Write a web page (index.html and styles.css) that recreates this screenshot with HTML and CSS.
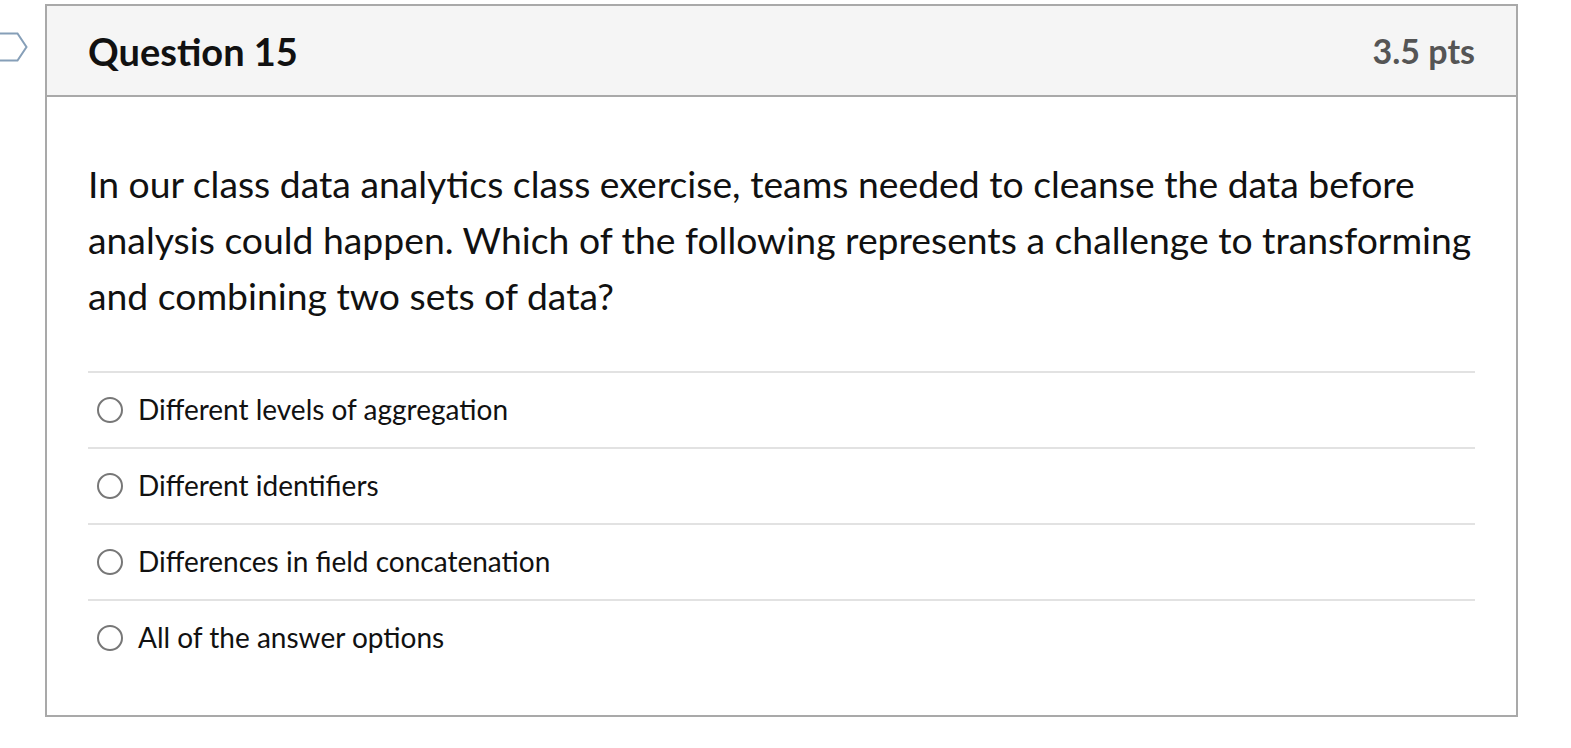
FILE: index.html
```html
<!DOCTYPE html>
<html lang="en">
<head>
<meta charset="utf-8">
<title>Question 15</title>
<link rel="stylesheet" href="styles.css">
</head>
<body>
<svg class="flag" width="30" height="32" viewBox="0 0 30 32" aria-hidden="true">
  <polygon points="-10,1.5 17.5,1.5 26.5,15 17.5,28.5 -10,28.5" fill="none" stroke="#869fb8" stroke-width="2"/>
</svg>
<div class="card">
  <div class="card-header">
    <span class="q-title">Question 15</span>
    <span class="q-points">3.5 pts</span>
  </div>
  <div class="card-body">
    <p class="q-text">In our class data analytics class exercise, teams needed to cleanse the data before analysis could happen. Which of the following represents a challenge to transforming and combining two sets of data?</p>
    <ul class="answers">
      <li class="answer"><span class="radio"></span><span>Different levels of aggregation</span></li>
      <li class="answer"><span class="radio"></span><span>Different identifiers</span></li>
      <li class="answer"><span class="radio"></span><span>Differences in field concatenation</span></li>
      <li class="answer"><span class="radio"></span><span>All of the answer options</span></li>
    </ul>
  </div>
</div>
</body>
</html>
```
FILE: styles.css
```css
html, body {
  margin: 0;
  padding: 0;
  background: #fff;
}
body {
  font-family: Lato, "Open Sans", sans-serif;
  color: #111;
  position: relative;
  padding-top: 4px;
}
.flag {
  position: absolute;
  left: 0;
  top: 32px;
}
.card {
  margin-left: 45px;
  width: 1473px;
  box-sizing: border-box;
  border: 2px solid #a9a9a9;
}
.card-header {
  height: 89px;
  background: #f5f5f5;
  border-bottom: 2px solid #a9a9a9;
  display: flex;
  align-items: center;
  justify-content: space-between;
  padding: 0 41px;
}
.q-title {
  font-weight: 700;
  font-size: 38px;
  color: #111;
}
.q-points {
  font-weight: 700;
  font-size: 34px;
  color: #555;
}
.card-body {
  padding: 59px 41px 40px;
}
.q-text {
  margin: 0;
  font-size: 37.3px;
  line-height: 56px;
}
.answers {
  list-style: none;
  margin: 47px 0 0;
  padding: 0;
}
.answer {
  height: 76px;
  box-sizing: border-box;
  border-top: 2px solid #e2e2e2;
  display: flex;
  align-items: center;
  font-size: 28px;
  padding-left: 9px;
  padding-bottom: 3px;
  gap: 15px;
}
.radio {
  width: 22px;
  height: 22px;
  border: 2px solid #777;
  border-radius: 50%;
  flex: none;
  margin-top: 3px;
}
```
